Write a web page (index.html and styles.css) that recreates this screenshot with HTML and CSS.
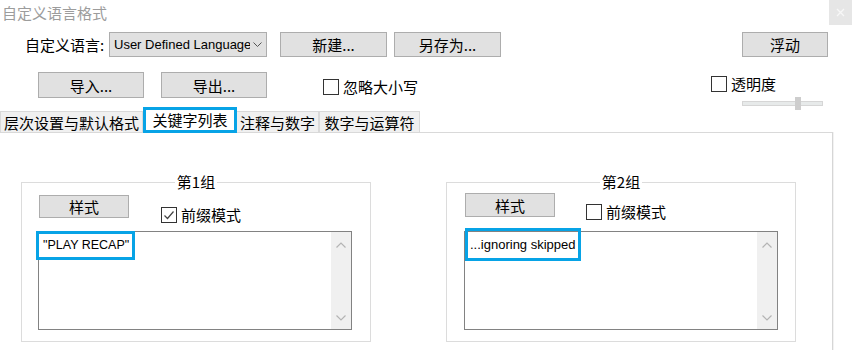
FILE: index.html
```html
<!DOCTYPE html>
<html lang="zh-CN">
<head>
<meta charset="utf-8">
<title>自定义语言格式</title>
<link rel="stylesheet" href="styles.css">
</head>
<body>
<div class="window">
  <div class="titlebar">
    <span class="title">自定义语言格式</span>
    <span class="close"><svg width="9" height="9" viewBox="0 0 9 9"><path d="M1 1L8 8M8 1L1 8" stroke="#f7f7f7" stroke-width="1.4"/></svg></span>
  </div>

  <div class="row1">
    <span class="lbl">自定义语言:</span>
    <div class="select">
      <span class="select-text">User Defined Language</span>
      <svg class="chev" width="9" height="5" viewBox="0 0 9 5"><path d="M0.5 0.5L4.5 4.5L8.5 0.5" fill="none" stroke="#555" stroke-width="1"/></svg>
    </div>
    <div class="btn btn-new">新建...</div>
    <div class="btn btn-saveas">另存为...</div>
    <div class="btn btn-float">浮动</div>
  </div>

  <div class="row2">
    <div class="btn btn-imp">导入...</div>
    <div class="btn btn-exp">导出...</div>
    <label class="chk chk-case"><span class="box"></span><span>忽略大小写</span></label>
    <div class="opacity">
      <label class="chk"><span class="box"></span><span>透明度</span></label>
      <div class="slider"><div class="track"></div><div class="thumb"></div></div>
    </div>
  </div>

  <div class="tabs">
    <div class="tab tab1">层次设置与默认格式</div>
    <div class="tab tab2 active">关键字列表</div>
    <div class="tab tab3">注释与数字</div>
    <div class="tab tab4">数字与运算符</div>
  </div>

  <div class="panel">
    <fieldset class="group">
      <legend>第1组</legend>
      <div class="group-top">
        <div class="btn btn-style">样式</div>
        <label class="chk chk-prefix"><span class="box"><svg width="14" height="14" viewBox="0 0 14 14"><path d="M2.5 7.5L5.5 10.5L11.5 3.5" fill="none" stroke="#444" stroke-width="1.2"/></svg></span><span>前缀模式</span></label>
      </div>
      <div class="listbox">
        <div class="list-content"><span class="item item1">"PLAY RECAP"</span></div>
        <div class="scroll">
          <svg width="10" height="6" viewBox="0 0 10 6"><path d="M0.5 5.5L5 1L9.5 5.5" fill="none" stroke="#b4b4b4" stroke-width="1.2"/></svg>
          <svg width="10" height="6" viewBox="0 0 10 6"><path d="M0.5 0.5L5 5L9.5 0.5" fill="none" stroke="#b4b4b4" stroke-width="1.2"/></svg>
        </div>
      </div>
    </fieldset>

    <fieldset class="group group2">
      <legend>第2组</legend>
      <div class="group-top">
        <div class="btn btn-style">样式</div>
        <label class="chk chk-prefix"><span class="box"></span><span>前缀模式</span></label>
      </div>
      <div class="listbox">
        <div class="list-content"><span class="item item2">...ignoring skipped</span></div>
        <div class="scroll">
          <svg width="10" height="6" viewBox="0 0 10 6"><path d="M0.5 5.5L5 1L9.5 5.5" fill="none" stroke="#b4b4b4" stroke-width="1.2"/></svg>
          <svg width="10" height="6" viewBox="0 0 10 6"><path d="M0.5 0.5L5 5L9.5 0.5" fill="none" stroke="#b4b4b4" stroke-width="1.2"/></svg>
        </div>
      </div>
    </fieldset>
  </div>
</div>
</body>
</html>
```
FILE: styles.css
```css
* { box-sizing: border-box; }

html, body {
  margin: 0;
  padding: 0;
  background: #fff;
}

body {
  width: 852px;
  height: 350px;
  overflow: hidden;
  font-family: "Noto Sans CJK SC", "Liberation Sans", sans-serif;
  font-size: 15px;
  color: #000;
}

.window {
  width: 852px;
  height: 350px;
}

/* title bar */
.titlebar {
  display: flex;
  height: 25px;
}
.title {
  padding-left: 2px;
  line-height: 26px;
  color: #9c9c9c;
  font-size: 15px;
}
.close {
  margin-left: auto;
  width: 23px;
  height: 25px;
  background: #e6e6e6;
  display: flex;
  align-items: center;
  justify-content: center;
}

/* generic button */
.btn {
  height: 25px;
  border: 1px solid #adadad;
  background: #e1e1e1;
  display: flex;
  align-items: center;
  justify-content: center;
  line-height: 1;
  font-size: 15px;
}

/* row 1 */
.row1 {
  display: flex;
  align-items: center;
  height: 25px;
  margin-top: 7px;
}
.lbl {
  width: 109px;
  padding-left: 25px;
  line-height: 25px;
}
.select {
  width: 158px;
  height: 25px;
  border: 1px solid #adadad;
  background: #e1e1e1;
  display: flex;
  align-items: center;
  padding-left: 4px;
  margin-right: 13px;
}
.select-text {
  width: 136px;
  overflow: hidden;
  white-space: nowrap;
  font-family: "Liberation Sans", sans-serif;
  font-size: 13px;
}
.chev { margin-left: 3px; }
.btn-new, .btn-saveas { width: 107px; }
.btn-new { margin-right: 7px; }
.btn-float {
  width: 86px;
  margin-left: auto;
  margin-right: 24px;
}

/* row 2 */
.row2 {
  display: flex;
  align-items: flex-start;
  height: 39px;
  margin-top: 15px;
}
.btn-imp, .btn-exp {
  width: 106px;
  height: 26px;
}
.btn-imp { margin-left: 38px; }
.btn-exp { margin-left: 17px; }

.chk {
  display: flex;
  align-items: center;
  gap: 4px;
  line-height: 16px;
}
.box {
  width: 16px;
  height: 16px;
  border: 1px solid #333;
  background: #fff;
  display: flex;
  align-items: center;
  justify-content: center;
}
.chk-case {
  margin-left: 56px;
  margin-top: 7px;
}

.opacity {
  margin-left: auto;
  margin-right: 29px;
  width: 112px;
  margin-top: 4px;
  display: flex;
  flex-direction: column;
}
.slider {
  position: relative;
  margin-left: 31px;
  margin-top: 5px;
  width: 81px;
  height: 13px;
}
.track {
  margin-top: 4px;
  height: 5px;
  background: #e7eaea;
  border: 1px solid #d6d6d6;
}
.thumb {
  position: absolute;
  left: 53px;
  top: 0;
  width: 6px;
  height: 13px;
  background: #cdcdcd;
}

/* tabs */
.tabs {
  display: flex;
  align-items: flex-end;
  height: 21px;
  position: relative;
  z-index: 1;
}
.tab {
  height: 21px;
  background: #f0f0f0;
  border: 1px solid #d9d9d9;
  border-bottom: none;
  display: flex;
  align-items: center;
  justify-content: center;
  font-size: 15px;
  line-height: 1;
  padding-top: 1px;
}
.tab1 { width: 143px; }
.tab2 { width: 94px; }
.tab3 { width: 82px; border-left: none; }
.tab4 { width: 101px; }
.tab.active {
  height: 26px;
  margin-bottom: -1px;
  background: #fff;
  border: 3px solid #07a3e6;
  padding-top: 0;
  padding-bottom: 2px;
}

/* panel */
.panel {
  width: 833px;
  height: 218px;
  border-top: 1px solid #d9d9d9;
  border-right: 1px solid #d6d6d6;
  box-shadow: 1px 0 0 #f2f2f2;
  display: flex;
  align-items: flex-start;
  padding-left: 21px;
  padding-top: 39px;
  gap: 75px;
}

.group {
  width: 350px;
  height: 170px;
  margin: 0;
  padding: 0;
  border: 1px solid #dcdcdc;
  min-width: 0;
}
.group legend {
  margin: 0 auto;
  padding: 0 2px;
  line-height: 20px;
  font-size: 15px;
}
.group-top {
  display: flex;
  align-items: flex-start;
  height: 36px;
  margin-top: 3px;
}
.btn-style {
  width: 90px;
  height: 23px;
  margin-left: 17px;
}
.chk-prefix {
  margin-left: 32px;
  margin-top: 12px;
}
.group2 .group-top { margin-top: 1px; height: 38px; }
.group2 .btn-style { margin-left: 18px; height: 24px; }
.group2 .chk-prefix { margin-left: 31px; margin-top: 11px; }

.listbox {
  display: flex;
  width: 314px;
  height: 99px;
  margin-left: 16px;
  border: 1px solid #828282;
  background: #fff;
}
.group2 .listbox { margin-left: 17px; }
.list-content {
  flex: 1;
  min-width: 0;
}
.scroll {
  width: 20px;
  background: #f0f0f0;
  display: flex;
  flex-direction: column;
  align-items: center;
  justify-content: space-between;
  padding: 10px 0 8px;
}

.item {
  display: inline-block;
  border: 3px solid #07a3e6;
  font-family: "Liberation Sans", sans-serif;
  font-size: 12.5px;
  white-space: nowrap;
}
.item1 {
  margin-left: -3px;
  margin-top: -3px;
  width: 99px;
  height: 29px;
  padding-left: 4px;
  line-height: 23px;
}
.item2 {
  margin-left: 0;
  margin-top: -4px;
  width: 116px;
  height: 33px;
  padding-left: 2px;
  line-height: 27px;
  font-size: 13px;
}
```
